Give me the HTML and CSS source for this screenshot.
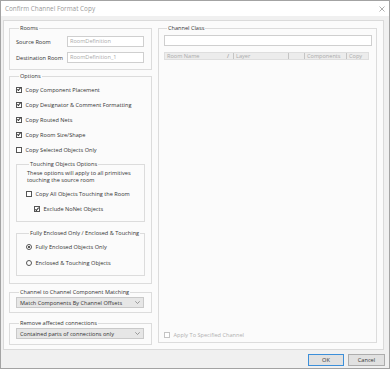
FILE: index.html
```html
<!DOCTYPE html>
<html>
<head>
<meta charset="utf-8">
<link rel="stylesheet" href="styles.css">
</head>
<body>
<div class="window">
  <div class="titlebar">
    <span class="title">Confirm Channel Format Copy</span>
    <svg class="close" width="6" height="6" viewBox="0 0 6 6"><path d="M0.5 0.5L5.5 5.5M5.5 0.5L0.5 5.5" stroke="#9a9a9a" stroke-width="0.8" fill="none"/></svg>
  </div>
  <div class="panel">
    <div class="left">
      <fieldset class="grp rooms">
        <legend>Rooms</legend>
        <div class="field"><span class="flabel">Source Room</span><span class="input">RoomDefinition</span></div>
        <div class="field"><span class="flabel">Destination Room</span><span class="input">RoomDefinition_1</span></div>
      </fieldset>
      <fieldset class="grp options">
        <legend>Options</legend>
        <div class="check on"><span class="box"></span>Copy Component Placement</div>
        <div class="check on"><span class="box"></span>Copy Designator &amp; Comment Formatting</div>
        <div class="check on"><span class="box"></span>Copy Routed Nets</div>
        <div class="check on"><span class="box"></span>Copy Room Size/Shape</div>
        <div class="check"><span class="box"></span>Copy Selected Objects Only</div>
        <fieldset class="grp sub touching">
          <legend>Touching Objects Options</legend>
          <p class="note">These options will apply to all primitives<br>touching the source room</p>
          <div class="check row2"><span class="box"></span>Copy All Objects Touching the Room</div>
          <div class="check row2 on indent"><span class="box"></span>Exclude NoNet Objects</div>
        </fieldset>
        <fieldset class="grp sub enclosed">
          <legend>Fully Enclosed Only / Enclosed &amp; Touching</legend>
          <div class="radio on"><span class="dot"></span>Fully Enclosed Objects Only</div>
          <div class="radio"><span class="dot"></span>Enclosed &amp; Touching Objects</div>
        </fieldset>
      </fieldset>
      <fieldset class="grp matching">
        <legend>Channel to Channel Component Matching</legend>
        <div class="select"><span>Match Components By Channel Offsets</span><svg width="5" height="3" viewBox="0 0 5 3"><path d="M0.3 0.3L2.5 2.5L4.7 0.3" stroke="#777" stroke-width="0.7" fill="none"/></svg></div>
      </fieldset>
      <fieldset class="grp remove">
        <legend>Remove affected connections</legend>
        <div class="select"><span>Contained parts of connections only</span><svg width="5" height="3" viewBox="0 0 5 3"><path d="M0.3 0.3L2.5 2.5L4.7 0.3" stroke="#777" stroke-width="0.7" fill="none"/></svg></div>
      </fieldset>
    </div>
    <fieldset class="grp right">
      <legend>Channel Class</legend>
      <div class="input wide"></div>
      <div class="thead">
        <span class="th name">Room Name<i>/</i></span>
        <span class="th">Layer</span>
        <span class="th"></span>
        <span class="th">Components</span>
        <span class="th">Copy</span>
      </div>
      <div class="spacer"></div>
      <div class="check disabled"><span class="box"></span>Apply To Specified Channel</div>
    </fieldset>
  </div>
  <div class="footer">
    <button class="btn ok">OK</button>
    <button class="btn">Cancel</button>
  </div>
</div>
</body>
</html>
```

FILE: styles.css
```css
html, body {
  margin: 0;
  padding: 0;
}
body {
  font-family: "Open Sans", "Noto Sans", sans-serif;
  font-size: 5.6px;
  color: #333;
  background: #f0f0f0;
}
.window {
  width: 390px;
  height: 369px;
  box-sizing: border-box;
  border: 1px solid #a3a3a3;
  background: #f0f0f0;
  display: flex;
  flex-direction: column;
}
.titlebar {
  flex: none;
  height: 15px;
  background: #fff;
  display: flex;
  align-items: center;
  justify-content: space-between;
  padding: 0 4px 0 4px;
}
.title {
  font-size: 6.4px;
  color: #9a9a9a;
}
.close {
  display: block;
}
.panel {
  flex: none;
  margin: 4px 5px 0 2px;
  border: 1px solid #dadada;
  background: #fbfbfb;
  padding: 3px 6px 4px 5px;
  display: flex;
  gap: 6px;
}
.left {
  width: 143px;
  display: flex;
  flex-direction: column;
}
fieldset.grp {
  margin: 0;
  padding: 0;
  border: 1px solid #dcdcdc;
  min-width: 0;
}
legend {
  margin-left: 3px;
  padding: 0 1px;
  line-height: 8px;
  font-size: 5.6px;
  color: #333;
  white-space: nowrap;
}
.rooms {
  padding: 4px 7px 6px 6px !important;
  display: flex;
  flex-direction: column;
  gap: 5px;
}
.field {
  display: flex;
  align-items: center;
  height: 11px;
}
.flabel {
  width: 51px;
}
.input {
  box-sizing: border-box;
  width: 77px;
  height: 11px;
  border: 1px solid #cfcfcf;
  background: #fff;
  color: #ababab;
  padding-left: 2px;
  line-height: 9px;
}
.options {
  margin-top: 2px !important;
  padding: 2px 6px 7px 6px !important;
}
.check, .radio {
  display: flex;
  align-items: center;
  height: 15px;
}
.box {
  box-sizing: border-box;
  width: 6px;
  height: 6px;
  border: 1px solid #555;
  background: #fff;
  margin-right: 3.5px;
  flex: none;
  position: relative;
}
.check.on .box::after {
  content: "";
  position: absolute;
  left: 1.3px;
  top: -0.2px;
  width: 1.4px;
  height: 2.8px;
  border: solid #333;
  border-width: 0 0.8px 0.8px 0;
  transform: rotate(40deg);
}
.sub {
  margin-top: 3px !important;
}
.touching {
  padding: 2px 6px 5px 9px !important;
}
.note {
  margin: 0;
  line-height: 7px;
  padding-left: 1px;
}
.check.row2 {
  height: 14.5px;
}
.touching .check.row2:first-of-type {
  margin-top: 3px;
}
.indent {
  padding-left: 8px;
}
.enclosed {
  margin-top: 7px !important;
  padding: 2px 6px 4px 9px !important;
}
.radio {
  height: 16px;
}
.dot {
  box-sizing: border-box;
  width: 6px;
  height: 6px;
  border: 1px solid #555;
  border-radius: 50%;
  background: #fff;
  margin-right: 3.5px;
  flex: none;
  display: flex;
  align-items: center;
  justify-content: center;
}
.radio.on .dot::after {
  content: "";
  width: 2.4px;
  height: 2.4px;
  border-radius: 50%;
  background: #222;
}
.matching {
  margin-top: 4px !important;
  padding: 1px 7px 4px 6px !important;
}
.remove {
  margin-top: 6px !important;
  padding: 1px 7px 5px 6px !important;
}
.select {
  box-sizing: border-box;
  height: 11px;
  border: 1px solid #c9c9c9;
  background: #e6e6e6;
  display: flex;
  align-items: center;
  justify-content: space-between;
  padding: 0 3px 0 3px;
  color: #333;
}
.select svg {
  display: block;
}
.right {
  width: 219px;
  box-sizing: border-box;
  margin-bottom: 2px !important;
  padding: 3px 4px 3px 5px !important;
  display: flex;
  flex-direction: column;
}
.input.wide {
  width: 208px;
}
.thead {
  margin-top: 6px;
  width: 205px;
  height: 8px;
  box-sizing: border-box;
  display: grid;
  grid-template-columns: 69px 55px 16px 42px 23px;
  background: #ececec;
  border: 1px solid #dedede;
  color: #ababab;
}
.th {
  border-right: 1px solid #c4c4c4;
  line-height: 6px;
  padding-left: 2px;
  display: flex;
  justify-content: space-between;
  overflow: hidden;
  white-space: nowrap;
}
.th:last-child {
  border-right: none;
}
.th i {
  font-style: normal;
  padding-right: 4px;
  color: #888;
}
.spacer {
  flex: 1;
}
.check.disabled {
  height: 8px;
  color: #b0b0b0;
}
.check.disabled .box {
  border-color: #c4c4c4;
}
.footer {
  flex: none;
  display: flex;
  justify-content: flex-end;
  gap: 4px;
  margin-top: 4px;
  padding-right: 4px;
}
.btn {
  box-sizing: border-box;
  width: 37px;
  height: 12px;
  border: 1px solid #adadad;
  background: #e1e1e1;
  font-family: inherit;
  font-size: 5.6px;
  color: #333;
  padding: 0;
  margin: 0;
  line-height: 10px;
}
.btn.ok {
  width: 36px;
  border-color: #3c8fd9;
}
```
